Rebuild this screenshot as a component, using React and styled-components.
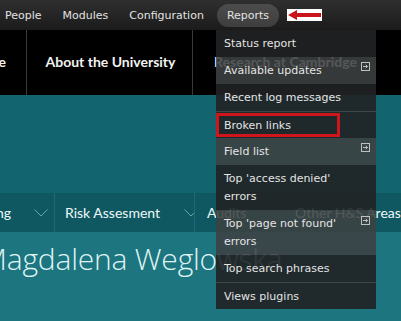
import React from "react";
import styled, { createGlobalStyle } from "styled-components";

const GlobalStyle = createGlobalStyle`
  html, body {
    margin: 0;
    padding: 0;
    background: #1d7580;
  }
  #root {
    width: 401px;
    height: 321px;
    overflow: hidden;
  }
`;

const Page = styled.div`
  position: relative;
  width: 401px;
  height: 321px;
  overflow: hidden;
  font-family: Lato, "Open Sans", sans-serif;
`;

const Toolbar = styled.div`
  display: flex;
  align-items: center;
  height: 30px;
  background: linear-gradient(#2f2f2f, #1b1b1b);
  font-family: "DejaVu Sans", Verdana, sans-serif;
  font-size: 11px;
  color: #e2e2e2;
`;

const ToolItem = styled.div`
  display: flex;
  align-items: center;
  height: 23px;
  padding: 0 10px;
  margin-left: ${(p) => p.$gap || 0}px;
  border-radius: 12px;
  background: ${(p) => (p.$active ? "linear-gradient(#4c4c4c, #3e3e3e)" : "transparent")};
`;

const ArrowTag = styled.div`
  display: flex;
  align-items: center;
  justify-content: center;
  width: 35px;
  height: 12px;
  margin-left: 8px;
  background: #fff;
`;

const Header = styled.div`
  display: flex;
  height: 65px;
  background: #000;
`;

const HeaderTab = styled.div`
  display: flex;
  align-items: center;
  justify-content: ${(p) => p.$align || "center"};
  width: ${(p) => p.$w}px;
  flex: none;
  overflow: hidden;
  white-space: nowrap;
  border-right: ${(p) => (p.$sep ? "1px solid #3a3a3a" : "none")};
  padding-right: ${(p) => p.$pr || 0}px;
  padding-left: ${(p) => p.$pl || 0}px;
  box-sizing: border-box;
  font-weight: 700;
  font-size: 14px;
  color: #f2f2f2;
  padding-bottom: 2px;
`;

const Hero = styled.div`
  height: 98px;
  background: #12646e;
`;

const Nav = styled.div`
  display: flex;
  height: 39px;
  background: #0f5862;
`;

const NavItem = styled.div`
  display: flex;
  align-items: center;
  justify-content: ${(p) => (p.$clip ? "flex-end" : "flex-start")};
  width: ${(p) => p.$w}px;
  flex: none;
  box-sizing: border-box;
  overflow: hidden;
  white-space: nowrap;
  padding: 0 ${(p) => p.$pr || 0}px 0 ${(p) => p.$pl || 0}px;
  border-right: ${(p) => (p.$sep ? "1px solid #1b6a74" : "none")};
  font-size: 14px;
  color: #eef8f8;
  gap: ${(p) => p.$gap || 0}px;
`;

const Chevron = () => (
  <svg width="14" height="8" viewBox="0 0 14 8" style={{ flex: "none" }}>
    <path d="M0.5 0.5 L7 7 L13.5 0.5" fill="none" stroke="#5fa6ae" strokeWidth="1" />
  </svg>
);

const NameBand = styled.div`
  height: 90px;
  background: #1d7580;
  display: flex;
  align-items: flex-start;
`;

const Name = styled.h1`
  margin: 6px 0 0 -19px;
  font-family: "Open Sans", "Noto Sans", sans-serif;
  font-weight: 300;
  font-size: 30px;
  color: #dff3f3;
  white-space: nowrap;
  letter-spacing: -0.2px;
`;

const Menu = styled.div`
  position: absolute;
  top: 30px;
  left: 216px;
  width: 160px;
  display: flex;
  flex-direction: column;
  font-family: "DejaVu Sans", Verdana, sans-serif;
  font-size: 11px;
  color: #e4e4e4;
`;

const MenuItem = styled.div`
  position: relative;
  display: flex;
  align-items: center;
  justify-content: space-between;
  box-sizing: border-box;
  min-height: ${(p) => (p.$tall ? 45 : 27)}px;
  padding: 0 6px 0 8px;
  line-height: 18px;
  background: ${(p) => (p.$light ? "rgba(62, 65, 66, 0.88)" : "rgba(33, 34, 35, 0.9)")};
  border-top: ${(p) => (p.$line ? "1px solid rgba(70, 72, 74, 0.9)" : "none")};
`;

const Highlight = styled.span`
  position: absolute;
  left: 0;
  top: 1px;
  width: 124px;
  height: 24px;
  box-sizing: border-box;
  border: 3px solid #d0161d;
`;

const MenuText = styled.span`
  padding-top: 1px;
`;

const SubIcon = styled.span`
  align-self: flex-start;
  margin-top: ${(p) => p.$top || 6}px;
  display: flex;
`;

const SubArrow = () => (
  <svg width="9" height="9" viewBox="0 0 9 9">
    <rect x="0.5" y="0.5" width="8" height="8" fill="none" stroke="#bfbfbf" strokeWidth="1" />
    <path d="M2 4.5 H6.5 M4.8 2.8 L6.5 4.5 L4.8 6.2" fill="none" stroke="#bfbfbf" strokeWidth="1" />
  </svg>
);

const RedArrow = () => (
  <svg width="33" height="10" viewBox="0 0 33 10">
    <path d="M0 5 L9 0 L9 3 L33 3 L33 7 L9 7 L9 10 Z" fill="#c8141b" />
  </svg>
);

const menu = [
  { label: "Status report" },
  { label: "Available updates", light: true, sub: true },
  { label: "Recent log messages" },
  { label: "Broken links", line: true, mark: true },
  { label: "Field list", light: true, sub: true },
  { label: ["Top 'access denied'", "errors"], tall: true },
  { label: ["Top 'page not found'", "errors"], light: true, sub: true, tall: true },
  { label: "Top search phrases" },
  { label: "Views plugins", line: true },
];

export default function App() {
  return (
    <Page>
      <GlobalStyle />
      <Toolbar>
        <ToolItem $gap={-5}>People</ToolItem>
        <ToolItem $gap={1}>Modules</ToolItem>
        <ToolItem $gap={1}>Configuration</ToolItem>
        <ToolItem $gap={3} $active>Reports</ToolItem>
        <ArrowTag>
          <RedArrow />
        </ArrowTag>
      </Toolbar>
      <Header>
        <HeaderTab $w={27} $align="flex-end" $sep $pr={20}>Home</HeaderTab>
        <HeaderTab $w={166} $sep $pl={2}>About the University</HeaderTab>
        <HeaderTab $w={208} $align="flex-start" $pl={21}>Research at Cambridge</HeaderTab>
      </Header>
      <Hero />
      <Nav>
        <NavItem $w={55} $clip $sep $pr={6} $gap={23}>
          Training
          <Chevron />
        </NavItem>
        <NavItem $w={140} $sep $pl={10} $gap={24}>
          Risk Assesment
          <Chevron />
        </NavItem>
        <NavItem $w={90} $pl={12}>Audits</NavItem>
        <NavItem $w={116} $pl={10}>Other H&amp;S Areas</NavItem>
      </Nav>
      <NameBand>
        <Name>Magdalena Weglowska</Name>
      </NameBand>
      <Menu>
        {menu.map((m, i) => (
          <MenuItem key={i} $light={m.light} $tall={m.tall} $line={m.line}>
            {m.mark && <Highlight />}
            <MenuText>
              {Array.isArray(m.label)
                ? m.label.map((l, j) => <div key={j}>{l}</div>)
                : m.label}
            </MenuText>
            {m.sub && (
              <SubIcon $top={m.tall ? 6 : 5}>
                <SubArrow />
              </SubIcon>
            )}
          </MenuItem>
        ))}
      </Menu>
    </Page>
  );
}
